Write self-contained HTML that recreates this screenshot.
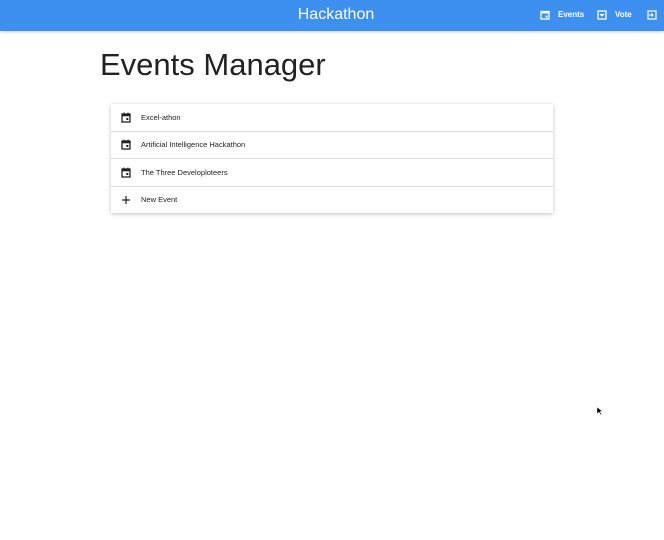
<!DOCTYPE html>
<html><head><style>
body{margin:0;width:664px;height:540px;background:#fff;font-family:"Liberation Sans",sans-serif;overflow:hidden;position:relative}
.bar{position:absolute;left:0;top:0;width:664px;height:31px;background:#3d8ff0;box-shadow:0 1px 3px rgba(0,0,0,.2)}
.title{position:absolute;left:4px;width:664px;top:6px;text-align:center;color:#fff;font-size:16px}
.nav{position:absolute;top:10px;color:#fff;font-size:8px;font-weight:bold}
h1{position:absolute;left:100px;top:47px;margin:0;font-weight:normal;font-size:31px;color:#222}
.card{position:absolute;left:111px;top:104px;width:442px;background:#fff;box-shadow:0 1px 4px rgba(0,0,0,.25)}
.row{height:26.6px;border-bottom:1px solid #ddd;position:relative;font-size:7.5px;color:#222}
.row:last-child{border-bottom:none}
.row span{position:absolute;left:30px;top:8.5px}
.row svg{position:absolute;left:10px;top:7.5px}
</style></head><body>
<div class="bar">
<div class="title">Hackathon</div>
<svg style="position:absolute;left:540px;top:10px" width="10" height="10" viewBox="0 0 10 10"><rect x="1" y="1.5" width="8" height="7.5" fill="none" stroke="#fff" stroke-width="1.3"/><rect x="1" y="1.5" width="8" height="2" fill="#fff"/><rect x="5.5" y="5.5" width="2" height="2" fill="#fff"/></svg>
<div class="nav" style="left:558px">Events</div>
<svg style="position:absolute;left:597px;top:10px" width="10" height="10" viewBox="0 0 10 10"><rect x="1" y="1" width="8" height="8" fill="none" stroke="#fff" stroke-width="1.3"/><path d="M3 4l2 2 2-2" fill="#fff" stroke="#fff"/></svg>
<div class="nav" style="left:615px">Vote</div>
<svg style="position:absolute;left:647px;top:10px" width="10" height="10" viewBox="0 0 10 10"><rect x="1" y="1" width="8" height="8" fill="none" stroke="#fff" stroke-width="1.2"/><path d="M2 5h4M4.5 3.5L6 5 4.5 6.5" fill="none" stroke="#fff" stroke-width="1.1"/></svg>
</div>
<h1>Events Manager</h1>
<div class="card">
<div class="row"><svg width="10" height="11" viewBox="0 0 10 11"><rect x="1" y="2" width="8" height="8" fill="none" stroke="#222" stroke-width="1.3"/><rect x="1" y="2" width="8" height="2.3" fill="#222"/><rect x="2.5" y="0.5" width="1" height="2" fill="#222"/><rect x="6.5" y="0.5" width="1" height="2" fill="#222"/><rect x="5.3" y="6" width="2" height="2" fill="#222"/></svg><span>Excel-athon</span></div>
<div class="row"><svg width="10" height="11" viewBox="0 0 10 11"><rect x="1" y="2" width="8" height="8" fill="none" stroke="#222" stroke-width="1.3"/><rect x="1" y="2" width="8" height="2.3" fill="#222"/><rect x="2.5" y="0.5" width="1" height="2" fill="#222"/><rect x="6.5" y="0.5" width="1" height="2" fill="#222"/><rect x="5.3" y="6" width="2" height="2" fill="#222"/></svg><span>Artificial Intelligence Hackathon</span></div>
<div class="row"><svg width="10" height="11" viewBox="0 0 10 11"><rect x="1" y="2" width="8" height="8" fill="none" stroke="#222" stroke-width="1.3"/><rect x="1" y="2" width="8" height="2.3" fill="#222"/><rect x="2.5" y="0.5" width="1" height="2" fill="#222"/><rect x="6.5" y="0.5" width="1" height="2" fill="#222"/><rect x="5.3" y="6" width="2" height="2" fill="#222"/></svg><span>The Three Developloteers</span></div>
<div class="row"><svg width="10" height="11" viewBox="0 0 10 11"><path d="M5 2v8M1 6h8" stroke="#222" stroke-width="1.2"/></svg><span>New Event</span></div>
</div>
<svg style="position:absolute;left:596px;top:406px" width="7" height="10" viewBox="0 0 7 10"><path d="M1 1v7l2-2 1.5 3 1-0.5L4 5.5h2.5z" fill="#000" stroke="#fff" stroke-width="0.5"/></svg>
</body></html>
